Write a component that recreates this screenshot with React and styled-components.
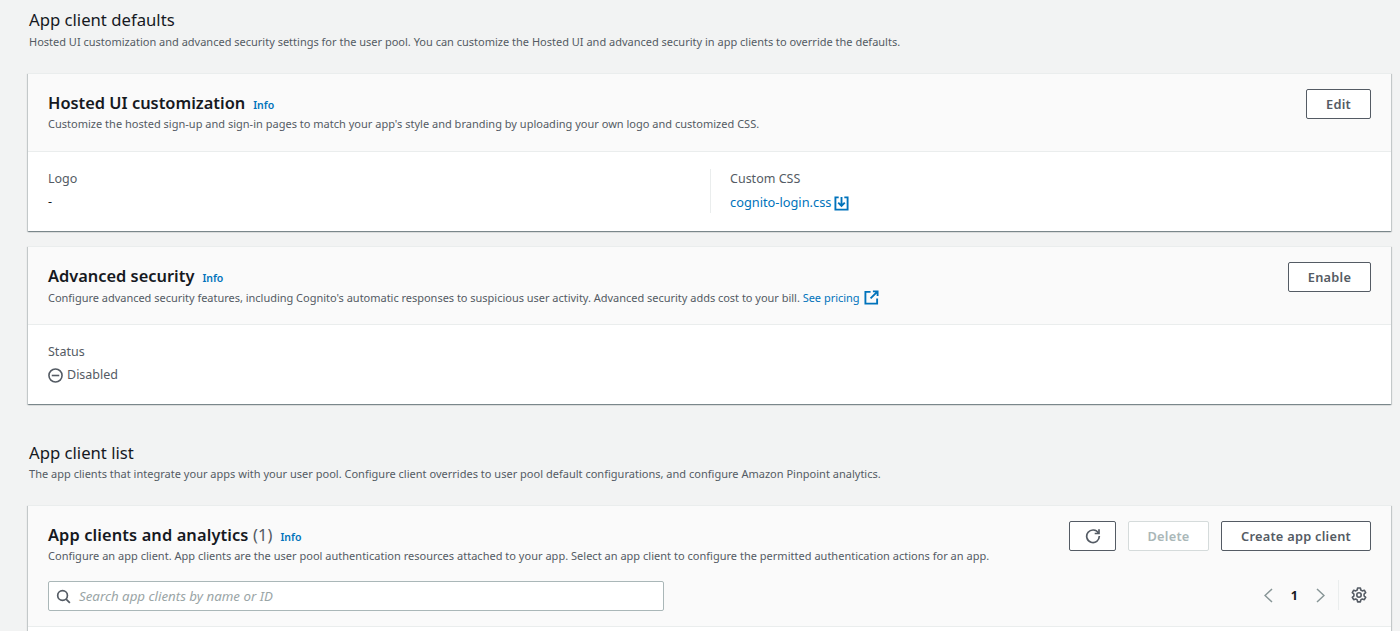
import React from 'react';
import styled, { createGlobalStyle } from 'styled-components';

const GlobalStyle = createGlobalStyle`
  html, body {
    margin: 0;
    padding: 0;
    height: 631px;
    overflow: hidden;
    background: #f2f3f3;
    font-family: "Noto Sans", "Open Sans", sans-serif;
    color: #16191f;
  }
`;

const Page = styled.div`
  padding: 8px 9px 0 28px;
  height: 631px;
  box-sizing: border-box;
  overflow: hidden;
`;

const Section = styled.section`
  margin-bottom: ${(p) => p.$gap || 0}px;
`;

const SectionTitle = styled.h2`
  margin: 0;
  padding-left: 1px;
  font-size: 16.7px;
  line-height: 23px;
  font-weight: 400;
  color: #16191f;
`;

const SectionText = styled.p`
  margin: ${(p) => (p.$tight ? 2 : 3)}px 0 23px;
  padding-left: 1px;
  font-size: 11px;
  line-height: 16px;
  letter-spacing: ${(p) => p.$track || 0}px;
  color: #545b64;
`;

const Card = styled.div`
  background: #fff;
  margin-bottom: ${(p) => p.$gap || 0}px;
  box-shadow: 0 1px 1px 0 rgba(0, 28, 36, 0.3), 1px 1px 1px 0 rgba(0, 28, 36, 0.15), -1px 1px 1px 0 rgba(0, 28, 36, 0.15);
`;

const CardHeader = styled.div`
  display: flex;
  justify-content: space-between;
  align-items: flex-start;
  background: #fafafa;
  border-top: 1px solid #eaeded;
  border-bottom: 1px solid #eaeded;
  height: ${(p) => p.$height}px;
  box-sizing: border-box;
  padding: 15px 20px 0;
`;

const HeadingRow = styled.div`
  display: flex;
  align-items: baseline;
  gap: 8px;
  height: 28px;
  padding-top: 2px;
  box-sizing: border-box;
`;

const CardTitle = styled.h3`
  margin: 0;
  font-size: 16.4px;
  line-height: 24px;
  font-weight: 600;
  letter-spacing: ${(p) => p.$track || 0}px;
  color: #16191f;
`;

const Count = styled.span`
  font-weight: 400;
  color: #545b64;
`;

const InfoLink = styled.a`
  font-size: 10.5px;
  font-weight: 600;
  color: #0073bb;
`;

const CardText = styled.p`
  margin: 0;
  font-size: 11px;
  line-height: 14px;
  letter-spacing: ${(p) => p.$track || 0}px;
  color: #545b64;
`;

const Button = styled.button`
  display: inline-flex;
  align-items: center;
  justify-content: center;
  height: 30px;
  width: ${(p) => p.$width}px;
  padding: 0;
  background: #fff;
  border: 1px solid ${(p) => (p.disabled ? '#d5dbdb' : '#545b64')};
  border-radius: 2px;
  font-family: inherit;
  font-size: 12.8px;
  font-weight: 600;
  letter-spacing: 0.25px;
  color: ${(p) => (p.disabled ? '#aab7b8' : '#545b64')};
`;

const Columns = styled.div`
  display: grid;
  grid-template-columns: 662px 1fr;
  padding: 17px 20px 0;
  height: ${(p) => p.$height}px;
  box-sizing: border-box;
`;

const Column = styled.div`
  height: 44px;
  ${(p) => p.$divided && 'border-left: 1px solid #eaeded; padding-left: 19px;'}
`;

const Label = styled.div`
  font-size: 12.5px;
  line-height: 20px;
  margin-bottom: 3px;
  color: #545b64;
`;

const Value = styled.div`
  display: flex;
  align-items: center;
  gap: ${(p) => p.$gap || 0}px;
  font-size: 12.5px;
  line-height: 20px;
  color: ${(p) => p.$color || '#16191f'};
`;

const FileLink = styled.a`
  font-size: 12.8px;
  margin-bottom: 2px;
  color: #0073bb;
`;

const InlineLink = styled.a`
  color: #0073bb;
`;

const LinkIcon = styled.svg`
  width: 15px;
  height: 15px;
  vertical-align: -3px;
  margin-left: ${(p) => p.$offset}px;
`;

const Actions = styled.div`
  display: flex;
  gap: 12px;
`;

const HeadRight = styled.div`
  display: flex;
  flex-direction: column;
  align-items: flex-end;
`;

const TitleColumn = styled.div`
  display: flex;
  flex-direction: column;
`;

const ToolRow = styled.div`
  display: flex;
  justify-content: space-between;
  align-items: center;
  margin-top: 18px;
`;

const SearchBox = styled.div`
  display: flex;
  align-items: center;
  gap: 8px;
  width: 616px;
  height: 30px;
  box-sizing: border-box;
  padding-left: 7px;
  background: #fff;
  border: 1px solid #aab7b8;
  border-radius: 2px;
  font-size: 13.3px;
  font-style: italic;
  color: #9aa5a6;
`;

const Pager = styled.div`
  display: flex;
  align-items: center;
  height: 30px;
  margin-top: 29px;
  padding-right: 4px;
`;

const PageNumber = styled.span`
  font-size: 12.5px;
  font-weight: 700;
  color: #16191f;
  margin: 0 18px;
`;

const Settings = styled.div`
  display: flex;
  align-items: center;
  margin-left: 13px;
  padding-left: 12px;
  height: 30px;
  border-left: 1px solid #eaeded;
`;

const ListCard = styled(Card)`
  height: 200px;
`;

function Refresh() {
  return (
    <svg width="16" height="16" viewBox="0 0 16 16" fill="none" stroke="#545b64" strokeWidth="1.7">
      <path d="M13.5 5.2A6.3 6.3 0 1 0 14.3 8" />
      <path d="M14 1.2v4.3H9.7" />
    </svg>
  );
}

function Chevron({ right }) {
  return (
    <svg width="9" height="15" viewBox="0 0 9 15" fill="none" stroke="#879596" strokeWidth="1.5">
      <path d={right ? 'M1 1l7 6.5L1 14' : 'M8 1 1 7.5 8 14'} />
    </svg>
  );
}

function Gear() {
  return (
    <svg width="16" height="16" viewBox="0 0 16 16" fill="none" stroke="#545b64" strokeWidth="1.6" strokeLinejoin="round">
      <path d="M6.6 1h2.8l.4 2 1.5.9 2-.7 1.4 2.4-1.6 1.4v1.9l1.6 1.4-1.4 2.4-2-.7-1.5.9-.4 2H6.6l-.4-2-1.5-.9-2 .7-1.4-2.4 1.6-1.4V7L1.3 5.6l1.4-2.4 2 .7 1.5-.9z" />
      <circle cx="8" cy="8" r="2.2" />
    </svg>
  );
}

export default function App() {
  return (
    <Page>
      <GlobalStyle />
      <Section $gap={37}>
        <SectionTitle>App client defaults</SectionTitle>
        <SectionText>
          Hosted UI customization and advanced security settings for the user pool. You can customize the Hosted UI and advanced security in app clients to override the defaults.
        </SectionText>
        <Card $gap={15}>
          <CardHeader $height={79}>
            <TitleColumn>
              <HeadingRow>
                <CardTitle>Hosted UI customization</CardTitle>
                <InfoLink>Info</InfoLink>
              </HeadingRow>
              <CardText $track={0.01}>
                Customize the hosted sign-up and sign-in pages to match your app's style and branding by uploading your own logo and customized CSS.
              </CardText>
            </TitleColumn>
            <Button $width={65}>Edit</Button>
          </CardHeader>
          <Columns $height={79}>
            <Column>
              <Label>Logo</Label>
              <Value>-</Value>
            </Column>
            <Column $divided>
              <Label>Custom CSS</Label>
              <Value>
                <FileLink>cognito-login.css</FileLink>
                <LinkIcon $offset={3} viewBox="0 0 16 16" fill="none" stroke="#0073bb" strokeWidth="2">
                  <path d="M5 1.5H1.5v13h13v-13H11" />
                  <path d="M8 1v9M4.5 7 8 10.5 11.5 7" />
                </LinkIcon>
              </Value>
            </Column>
          </Columns>
        </Card>
        <Card>
          <CardHeader $height={79}>
            <TitleColumn>
              <HeadingRow>
                <CardTitle>Advanced security</CardTitle>
                <InfoLink>Info</InfoLink>
              </HeadingRow>
              <CardText $track={-0.02}>
                Configure advanced security features, including Cognito's automatic responses to suspicious user activity. Advanced security adds cost to your bill.{' '}
                <InlineLink>See pricing</InlineLink>
                <LinkIcon $offset={4} viewBox="0 0 16 16" fill="none" stroke="#0073bb" strokeWidth="2">
                  <path d="M7 2H1.5v12.5H14V9" />
                  <path d="M9.5 1.5H14.5V6.5M14.5 1.5 7 9" />
                </LinkIcon>
              </CardText>
            </TitleColumn>
            <Button $width={83}>Enable</Button>
          </CardHeader>
          <Columns $height={79}>
            <Column>
              <Label>Status</Label>
              <Value $color="#545b64" $gap={4}>
                <svg width="15" height="15" viewBox="0 0 16 16" fill="none" stroke="#545b64" strokeWidth="1.7">
                  <circle cx="8" cy="8" r="7" />
                  <path d="M4 8h8" />
                </svg>
                Disabled
              </Value>
            </Column>
          </Columns>
        </Card>
      </Section>
      <Section>
        <SectionTitle>App client list</SectionTitle>
        <SectionText $tight $track={0.012}>
          The app clients that integrate your apps with your user pool. Configure client overrides to user pool default configurations, and configure Amazon Pinpoint analytics.
        </SectionText>
        <ListCard>
          <CardHeader $height={122}>
            <TitleColumn>
              <HeadingRow>
                <CardTitle $track={0.11}>
                  App clients and analytics <Count>(1)</Count>
                </CardTitle>
                <InfoLink>Info</InfoLink>
              </HeadingRow>
              <CardText $track={0.016}>
                Configure an app client. App clients are the user pool authentication resources attached to your app. Select an app client to configure the permitted authentication actions for an app.
              </CardText>
              <ToolRow>
                <SearchBox>
                  <svg width="15" height="15" viewBox="0 0 16 16" fill="none" stroke="#545b64" strokeWidth="1.8">
                    <circle cx="7" cy="7" r="5.2" />
                    <path d="m10.8 10.8 4 4" />
                  </svg>
                  Search app clients by name or ID
                </SearchBox>
              </ToolRow>
            </TitleColumn>
            <HeadRight>
              <Actions>
                <Button $width={47}>
                  <Refresh />
                </Button>
                <Button $width={81} disabled>
                  Delete
                </Button>
                <Button $width={150}>Create app client</Button>
              </Actions>
              <Pager>
                <Chevron />
                <PageNumber>1</PageNumber>
                <Chevron right />
                <Settings>
                  <Gear />
                </Settings>
              </Pager>
            </HeadRight>
          </CardHeader>
        </ListCard>
      </Section>
    </Page>
  );
}
